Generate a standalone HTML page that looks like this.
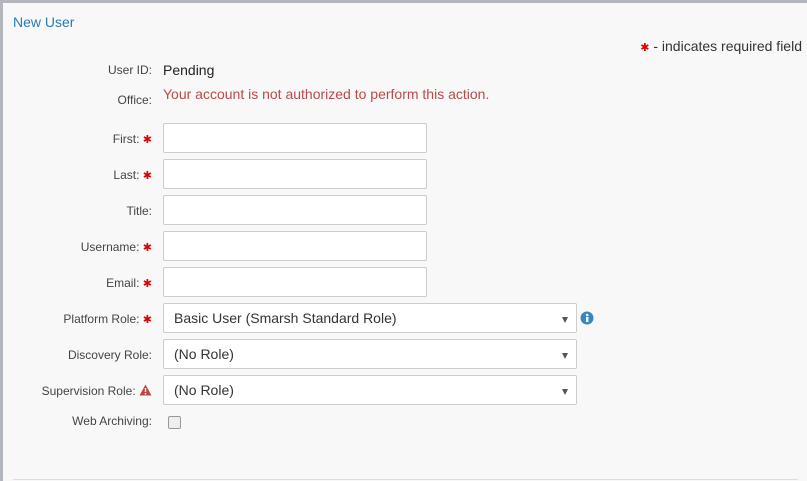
<!DOCTYPE html>
<html><head><style>
body{margin:0;width:807px;height:481px;background:#f8f8f8;font-family:"Liberation Sans",sans-serif;position:relative;overflow:hidden}
.bt{position:absolute;left:0;top:0;width:807px;height:3px;background:#b4b6bd}
.bl{position:absolute;left:0;top:0;width:3px;height:481px;background:#b4b6bd}
.bb{position:absolute;left:13px;top:479px;width:785px;height:1px;background:#ddd}
.t{position:absolute;left:13px;top:14px;font-size:14px;color:#2a7ab8}
.req{position:absolute;right:5px;top:38px;font-size:14px;color:#333}
.s{color:#d00;font-size:11px}
.l{position:absolute;right:655px;font-size:12px;color:#444;text-align:right;white-space:nowrap}
.v{position:absolute;left:163px;font-size:14px}
.in{position:absolute;left:163px;width:262px;height:28px;background:#fff;border:1px solid #ccc;border-radius:2px}
.sel{width:412px}
.sel span{position:absolute;left:10px;top:6px;font-size:14px;color:#333}
.sel i{position:absolute;right:8px;top:13px;width:0;height:0;border-left:3.5px solid transparent;border-right:3.5px solid transparent;border-top:6px solid #555}
</style></head><body>
<div class="bt"></div><div class="bl"></div><div class="bb"></div>
<div class="t">New User</div>
<div class="req"><span class="s">✱</span> - indicates required field</div>
<div class="l" style="top:63px">User ID:</div><div class="v" style="top:62px;color:#222">Pending</div>
<div class="l" style="top:93px">Office:</div><div class="v" style="top:86px;color:#b94a48">Your account is not authorized to perform this action.</div>
<div class="l" style="top:132px">First: <span class="s">✱</span></div><div class="in" style="top:123px"></div>
<div class="l" style="top:168px">Last: <span class="s">✱</span></div><div class="in" style="top:159px"></div>
<div class="l" style="top:204px">Title:</div><div class="in" style="top:195px"></div>
<div class="l" style="top:240px">Username: <span class="s">✱</span></div><div class="in" style="top:231px"></div>
<div class="l" style="top:276px">Email: <span class="s">✱</span></div><div class="in" style="top:267px"></div>
<div class="l" style="top:312px">Platform Role: <span class="s">✱</span></div><div class="in sel" style="top:303px"><span>Basic User (Smarsh Standard Role)</span><i></i></div>
<svg style="position:absolute;left:580px;top:311px" width="14" height="14"><circle cx="7" cy="7" r="6.5" fill="#3a87c0"/><rect x="6" y="6" width="2.4" height="5" fill="#fff"/><circle cx="7.2" cy="4" r="1.3" fill="#fff"/></svg>
<div class="l" style="top:348px">Discovery Role:</div><div class="in sel" style="top:339px"><span>(No Role)</span><i></i></div>
<div class="l" style="top:384px">Supervision Role: <svg width="13" height="12" style="vertical-align:-1px"><path d="M6.5 0.5L12.5 11.5H0.5Z" fill="#c0463f"/><rect x="5.8" y="4" width="1.4" height="4" fill="#fff"/><rect x="5.8" y="9" width="1.4" height="1.4" fill="#fff"/></svg></div><div class="in sel" style="top:375px"><span>(No Role)</span><i></i></div>
<div class="l" style="top:414px">Web Archiving:</div>
<div style="position:absolute;left:168px;top:416px;width:11px;height:11px;border:1px solid #999;border-radius:2px;background:#eee"></div>
</body></html>
